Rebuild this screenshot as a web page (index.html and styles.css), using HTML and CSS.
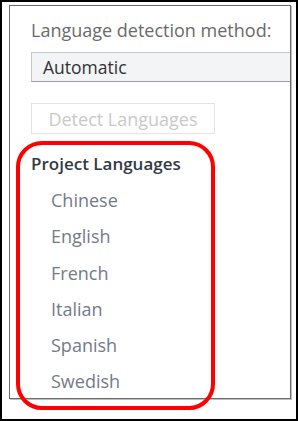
FILE: index.html
```html
<!DOCTYPE html>
<html lang="en">
<head>
  <meta charset="UTF-8" />
  <title>Language detection</title>
  <link rel="stylesheet" href="styles.css">
</head>
<body>
  <div class="frame">
    <div class="panel">
      <label class="field-label" for="method">Language detection method:</label>
      <div class="select" id="method">Automatic</div>

      <button class="detect-button" disabled>Detect Languages</button>

      <h4 class="list-title">Project Languages</h4>
      <ul class="lang-list">
        <li>Chinese</li>
        <li>English</li>
        <li>French</li>
        <li>Italian</li>
        <li>Spanish</li>
        <li>Swedish</li>
      </ul>
    </div>

    <!-- highlight drawn over the list -->
    <div class="highlight"></div>
  </div>
</body>
</html>
```

FILE: styles.css
```css
/* ------------------ Global Styles ------------------ */
body {
  margin: 0;
  font-family: "Open Sans", Lato, sans-serif;
  background: #fff;
}
.frame {
  position: relative;
  width: 298px;
  height: 421px;
  box-sizing: border-box;
  border: 2px solid #000;
  padding: 3px 0 0 7px;
}
.panel {
  width: 282px;
  height: 394px;
  box-sizing: border-box;
  border: 1px solid #6b6b6b;
  box-shadow: 1px 1px 0 #bdbdbd;
  padding: 12px 0 0 21px;
  overflow: hidden;
}
.field-label {
  display: block;
  font-size: 18px;
  color: #6a6a6a;
  line-height: 24px;
}
.select {
  margin-top: 10px;
  margin-right: -4px;
  height: 30px;
  box-sizing: border-box;
  border: 1px solid #c4c6cb;
  border-bottom-color: #9a9da3;
  background: #f3f4f6;
  padding-left: 11px;
  font-size: 17.5px;
  line-height: 28px;
  color: #323232;
}
.detect-button {
  display: block;
  margin-top: 21px;
  width: 184px;
  height: 31px;
  border: 1px solid #e3e3e3;
  background: #fff;
  font-family: inherit;
  font-size: 18px;
  color: #c9c9c9;
  padding: 0;
}
.list-title {
  margin: 19px 0 0 0;
  font-size: 17px;
  font-weight: 600;
  color: #323a45;
  line-height: 22px;
}
.lang-list {
  list-style: none;
  margin: 7px 0 0 0;
  padding: 0 0 0 20px;
}
.lang-list li {
  font-size: 18px;
  color: #727b8a;
  line-height: 36.3px;
}
.highlight {
  position: absolute;
  left: 14px;
  top: 139px;
  width: 199px;
  height: 269px;
  box-sizing: border-box;
  border: 4px solid #ff0000;
  border-radius: 26px;
}
```
